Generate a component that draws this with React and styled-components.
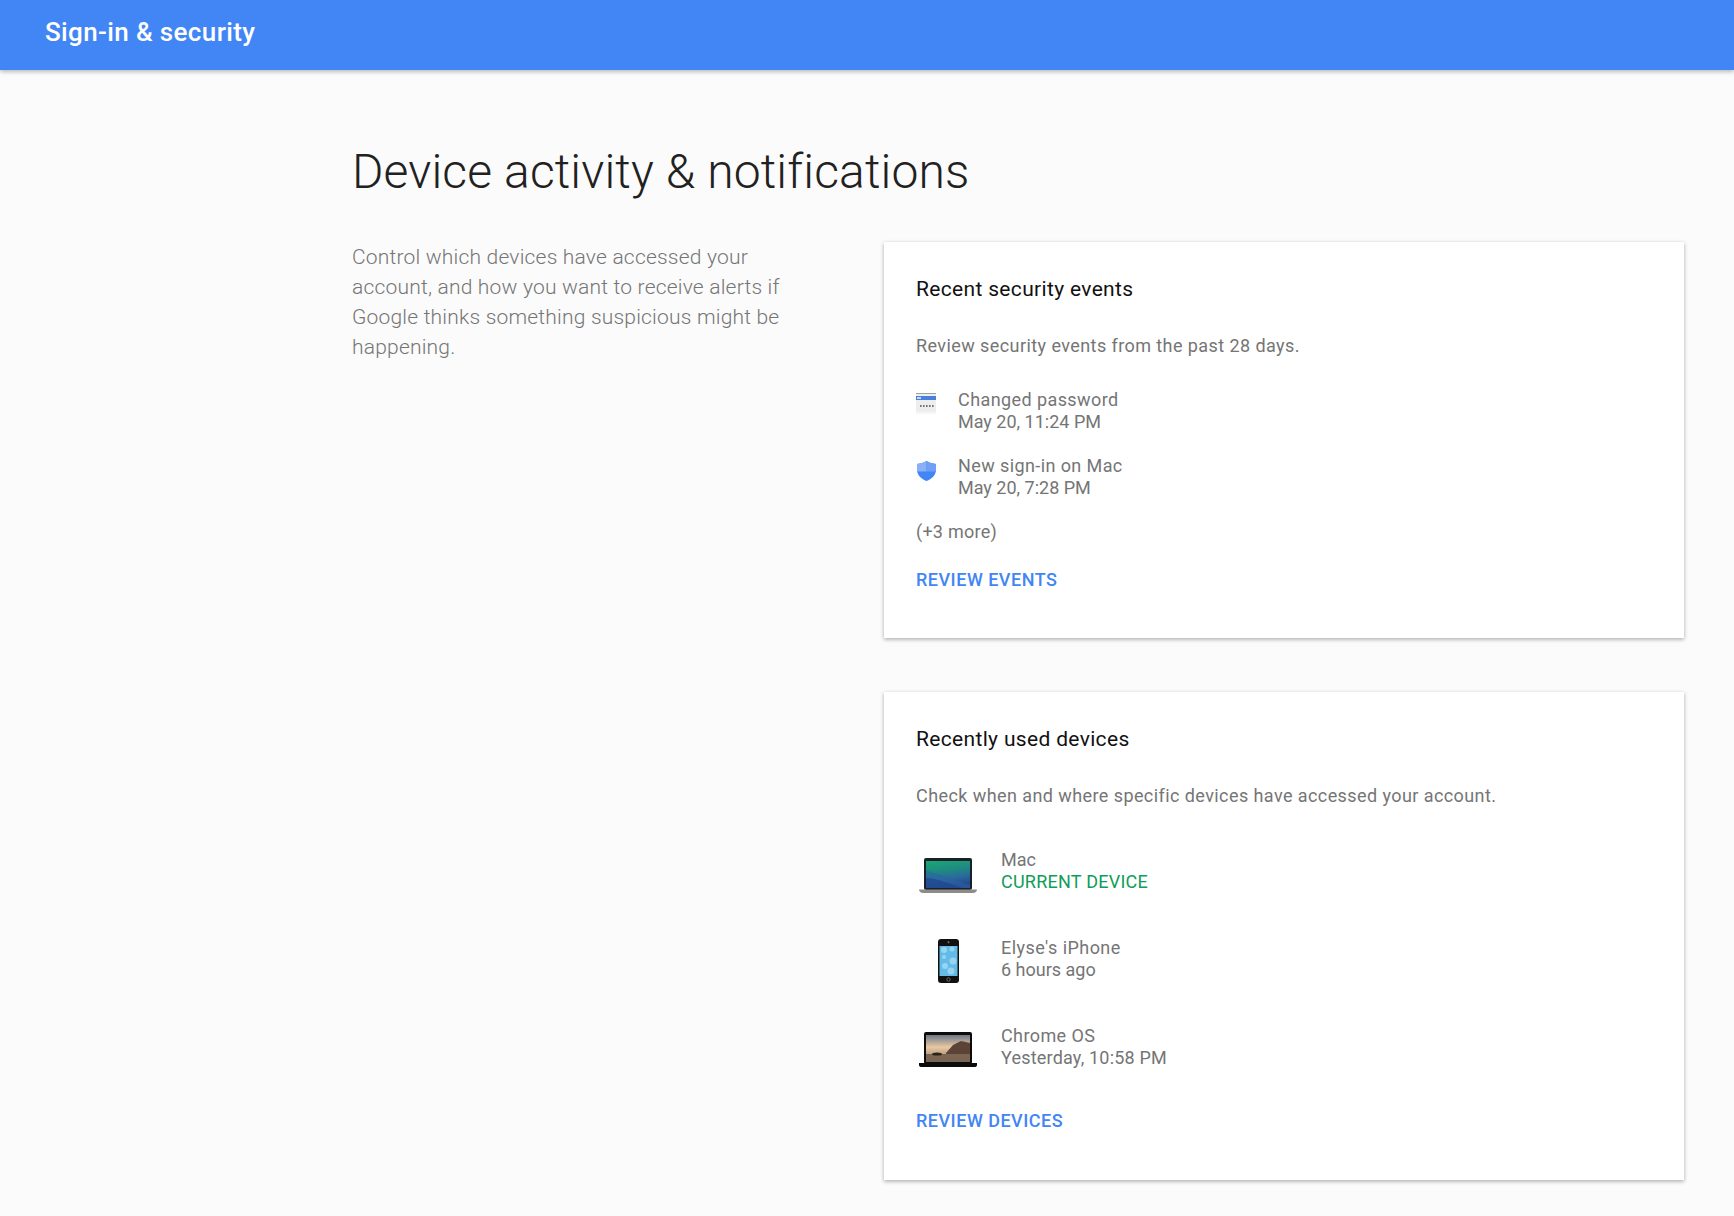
import React from "react";
import styled, { createGlobalStyle } from "styled-components";

const Global = createGlobalStyle`
  html, body { margin: 0; padding: 0; background: #fbfbfb; }
  body { font-family: Roboto, "Liberation Sans", sans-serif; }
`;
const Page = styled.div`min-height: 1216px; box-sizing: border-box; overflow: hidden;`;
const Header = styled.header`
  height: 70px; background: #4285f4; display: flex; align-items: center; padding: 0 0 6px 45px; box-sizing: border-box;
  box-shadow: 0 2px 4px rgba(0,0,0,.25);
`;
const HeaderTitle = styled.h1`margin: 0; color: #fff; font-size: 26px; font-weight: 500; line-height: 32px; letter-spacing: .37px;`;
const Main = styled.main`padding: 70px 50px 0 352px;`;
const PageTitle = styled.h2`margin: 0; color: #212121; font-size: 48px; font-weight: 300; line-height: 64px; letter-spacing: .13px;`;
const Columns = styled.div`display: flex; justify-content: space-between; margin-top: 38px;`;
const Intro = styled.p`margin: 0; width: 440px; color: #757575; font-size: 21px; font-weight: 300; line-height: 30px; letter-spacing: .2px;`;
const Cards = styled.div`width: 800px; display: flex; flex-direction: column; gap: 54px;`;
const Card = styled.section`
  background: #fff; padding: 33px 32px 0; box-sizing: border-box; height: ${p => p.$h}px;
  box-shadow: 0 1px 4px rgba(0,0,0,.2), 0 2px 4px rgba(0,0,0,.14);
`;
const CardTitle = styled.h3`margin: 0; color: #111; font-size: 21px; font-weight: 400; line-height: 28px; letter-spacing: .33px;`;
const Desc = styled.p`margin: 29px 0 0; color: #757575; font-size: 18px; line-height: 28px; letter-spacing: .42px;`;
const EventRow = styled.div`display: flex; gap: 22px; margin-top: ${p => p.$mt}px;`;
const DeviceRow = styled.div`display: flex; gap: 21px; margin-top: ${p => p.$mt}px;`;
const EventIcon = styled.div`width: 20px; height: 22px; flex: none; margin-top: ${p => p.$top}px; line-height: 0;`;
const DeviceIcon = styled.div`width: 64px; flex: none; display: flex; justify-content: center; margin-top: ${p => p.$top}px; line-height: 0;`;
const Lines = styled.div`color: #757575; font-size: 18px; line-height: 22px;`;
const Line = styled.div`letter-spacing: ${p => p.$ls || 0}px;`;
const Current = styled(Line)`color: #0f9d58;`;
const More = styled.p`margin: 22px 0 0; color: #757575; font-size: 18px; line-height: 22px; letter-spacing: .25px;`;
const Action = styled.a`display: block; color: #4285f4; font-size: 18px; font-weight: 500; line-height: 22px; margin-top: ${p => p.$mt}px; letter-spacing: .5px;`;

const PasswordIcon = () => (
  <svg width="20" height="22" viewBox="0 0 20 22">
    <rect x="0" y="0" width="20" height="20" fill="#eeeeee" />
    <rect x="0" y="0" width="20" height="1" fill="#9e9e9e" />
    <rect x="0" y="3" width="20" height="4" fill="#4a7fdc" />
    <rect x="1" y="4" width="4" height="2" fill="#c5d9f8" />
    {[4,7,10,13,16].map(x => <rect key={x} x={x} y="12" width="1.6" height="2" fill="#757575" />)}
    <rect x="0" y="19" width="20" height="2" fill="#f7f7f7" />
  </svg>
);
const ShieldIcon = () => (
  <svg width="20" height="20" viewBox="0 0 20 20">
    <path d="M10.5 0 C13 1.6 16.5 2.6 20 3 V9 C20 14 15.5 18 10.5 20 C5.5 18 1 14 1 9 V3 C4.5 2.6 8 1.6 10.5 0 Z" fill="#4285f4" />
    <path d="M10.5 0 C8 1.6 4.5 2.6 1 3 V9 C1 9.6 1.1 10 1.2 10.5 H10.5 Z" fill="#8ab0f7" />
    <path d="M10.5 0 C13 1.6 16.5 2.6 20 3 V9 C20 9.6 19.9 10 19.8 10.5 H10.5 Z" fill="#6fa0f6" />
  </svg>
);
const MacIcon = () => (
  <svg width="58" height="35" viewBox="0 0 58 35">
    <defs>
      <linearGradient id="mac" x1="0.1" y1="0" x2="0.35" y2="1">
        <stop offset="0" stopColor="#1aa577" />
        <stop offset=".4" stopColor="#1f8a80" />
        <stop offset=".7" stopColor="#2a6a9c" />
        <stop offset="1" stopColor="#23478e" />
      </linearGradient>
    </defs>
    <rect x="5" y="0" width="48" height="32" rx="2" fill="#1b2026" />
    <rect x="7" y="3" width="44" height="27" fill="url(#mac)" />
    <path d="M7 13 C16 14 30 20 51 27 V30 H7 Z" fill="#2e62a8" opacity=".55" />
    <path d="M7 20 C18 20 30 26 44 30 H7 Z" fill="#20458c" opacity=".7" />
    <path d="M0 31.5 H58 C58 33.5 56 35 54 35 H4 C2 35 0 33.5 0 31.5 Z" fill="#8f8b88" />
  </svg>
);
const PhoneIcon = () => (
  <svg width="21" height="44" viewBox="0 0 21 44">
    <defs><filter id="soft"><feGaussianBlur stdDeviation=".7" /></filter></defs>
    <rect x="0" y="0" width="21" height="44" rx="3" fill="#111" />
    <rect x="1.5" y="7" width="18" height="30" fill="#64bbe8" />
    <g filter="url(#soft)">
      {[[6,11,3],[14,10,2.5],[15,22,3.5],[7,27,3],[13,32,3.5],[6,18,2]].map(([x,y,r]) => <circle key={x+"-"+y} cx={x} cy={y} r={r} fill="#a3dcf5" opacity=".8" />)}
    </g>
    <circle cx="10.5" cy="3.2" r="1" fill="#777" />
    <circle cx="10.5" cy="40.5" r="1.7" fill="none" stroke="#888" strokeWidth=".7" />
  </svg>
);
const ChromeIcon = () => (
  <svg width="58" height="35" viewBox="0 0 58 35">
    <defs>
      <linearGradient id="sky" x1="0" y1="0" x2="0" y2="1">
        <stop offset="0" stopColor="#6d7787" />
        <stop offset=".45" stopColor="#e9c9a4" />
        <stop offset="1" stopColor="#8c715e" />
      </linearGradient>
    </defs>
    <rect x="5" y="0" width="48" height="32" rx="2" fill="#0c0c0c" />
    <rect x="7" y="3" width="44" height="27" fill="url(#sky)" />
    <path d="M27 21 L34 13 L42 9 L51 11 V22 H27 Z" fill="#5c4335" />
    <path d="M7 22 H51 V30 H7 Z" fill="#7a6454" />
    <ellipse cx="18" cy="22" rx="5" ry="1.6" fill="#2d221b" />
    <path d="M0 31 H58 V33 C58 34.5 57 35 55 35 H3 C1 35 0 34.5 0 33 Z" fill="#0c0c0c" />
  </svg>
);

const events = [
  { icon: <PasswordIcon />, a: "Changed password", b: "May 20, 11:24 PM", mt: 29, top: 4, ls: .41 },
  { icon: <ShieldIcon />, a: "New sign-in on Mac", b: "May 20, 7:28 PM", mt: 22, top: 6, ls: .4 },
];
const devices = [
  { icon: <MacIcon />, a: "Mac", b: "CURRENT DEVICE", current: true, mt: 39, top: 9, ls: 0, lsB: .24 },
  { icon: <PhoneIcon />, a: "Elyse's iPhone", b: "6 hours ago", mt: 44, top: 2, ls: .45 },
  { icon: <ChromeIcon />, a: "Chrome OS", b: "Yesterday, 10:58 PM", mt: 42, top: 7, ls: .4, lsB: .2 },
];

export default function App() {
  return (
    <Page>
      <Global />
      <Header><HeaderTitle>Sign-in &amp; security</HeaderTitle></Header>
      <Main>
        <PageTitle>Device activity &amp; notifications</PageTitle>
        <Columns>
          <Intro>Control which devices have accessed your account, and how you want to receive alerts if Google thinks something suspicious might be happening.</Intro>
          <Cards>
            <Card $h={396}>
              <CardTitle>Recent security events</CardTitle>
              <Desc>Review security events from the past 28 days.</Desc>
              {events.map(e => (
                <EventRow key={e.a} $mt={e.mt}>
                  <EventIcon $top={e.top}>{e.icon}</EventIcon>
                  <Lines><Line $ls={e.ls}>{e.a}</Line><Line>{e.b}</Line></Lines>
                </EventRow>
              ))}
              <More>(+3 more)</More>
              <Action $mt={26}>REVIEW EVENTS</Action>
            </Card>
            <Card $h={488}>
              <CardTitle>Recently used devices</CardTitle>
              <Desc>Check when and where specific devices have accessed your account.</Desc>
              {devices.map(d => (
                <DeviceRow key={d.a} $mt={d.mt}>
                  <DeviceIcon $top={d.top}>{d.icon}</DeviceIcon>
                  <Lines>
                    <Line $ls={d.ls}>{d.a}</Line>
                    {d.current ? <Current $ls={d.lsB}>{d.b}</Current> : <Line $ls={d.lsB}>{d.b}</Line>}
                  </Lines>
                </DeviceRow>
              ))}
              <Action $mt={41}>REVIEW DEVICES</Action>
            </Card>
          </Cards>
        </Columns>
      </Main>
    </Page>
  );
}
